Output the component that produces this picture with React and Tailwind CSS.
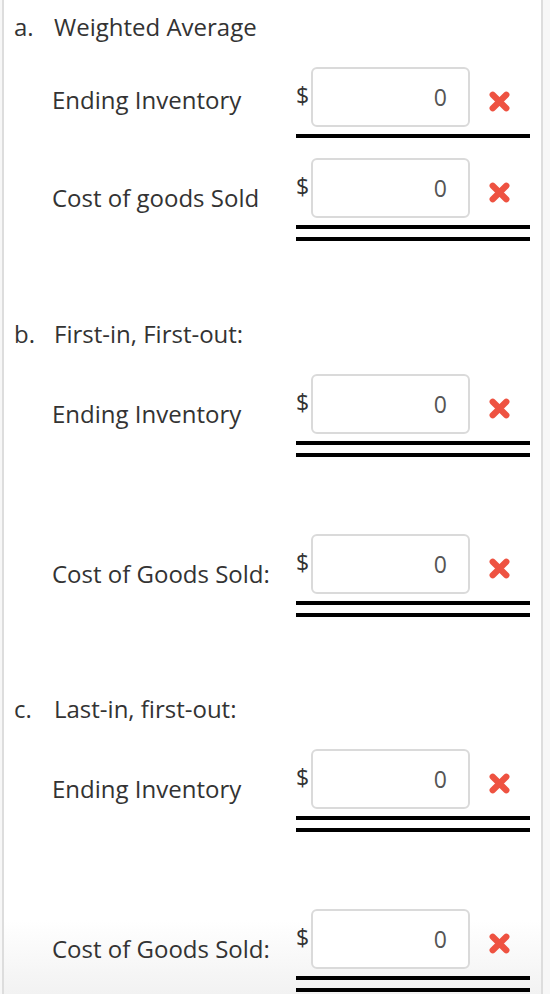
import React from 'react';

const SECTIONS = [
  {
    letter: 'a.',
    title: 'Weighted Average',
    mt: 'mt-0',
    rowGap: 'mt-[20px]',
    rows: [
      { label: 'Ending Inventory', double: false, labelPad: 'pt-[18px]' },
      { label: 'Cost of goods Sold', double: true, labelPad: 'pt-[25px]' },
    ],
  },
  {
    letter: 'b.',
    title: 'First-in, First-out:',
    mt: 'mt-[78px]',
    rowGap: 'mt-[77px]',
    rows: [
      { label: 'Ending Inventory', double: true, labelPad: 'pt-[25px]' },
      { label: 'Cost of Goods Sold:', double: true, labelPad: 'pt-[25px]' },
    ],
  },
  {
    letter: 'c.',
    title: 'Last-in, first-out:',
    mt: 'mt-[77px]',
    rowGap: 'mt-[77px]',
    rows: [
      { label: 'Ending Inventory', double: true, labelPad: 'pt-[25px]' },
      { label: 'Cost of Goods Sold:', double: true, labelPad: 'pt-[25px]' },
    ],
  },
];

// красный крестик "неверно"
function WrongMark() {
  return (
    <svg width="23" height="23" viewBox="0 0 22 22" className="shrink-0">
      <path d="M4.5 4.5 L17.5 17.5 M17.5 4.5 L4.5 17.5" stroke="#ee5241" strokeWidth="6" strokeLinecap="round" fill="none" />
    </svg>
  );
}

function AnswerRow({ row, className }) {
  return (
    <div className={`flex ${className}`}>
      <div className={`w-[245px] shrink-0 pl-[1px] ${row.labelPad} text-[24px] leading-[30px] text-[#333]`}>
        {row.label}
      </div>
      <div className="w-[234px] shrink-0">
        <div className="flex items-start">
          <span className="w-[15px] shrink-0 pt-[13px] text-[23px] leading-[30px] text-[#333]">$</span>
          <div className="w-[159px] h-[60px] shrink-0 border-2 border-[#dadada] rounded-[6px] bg-white flex items-center justify-end pr-[21px] text-[23px] text-[#555]">
            0
          </div>
          <div className="ml-[18px] mt-[23px]">
            <WrongMark />
          </div>
        </div>
        <div className="mt-[7px] h-[4px] bg-black" />
        {row.double && <div className="mt-[8px] h-[4px] bg-black" />}
      </div>
    </div>
  );
}

export default function App() {
  return (
    <div className="w-[550px] h-[994px] overflow-hidden bg-[#f7f7f7]" style={{ fontFamily: '"Open Sans", sans-serif' }}>
      <div className="ml-[2px] w-[541px] h-[994px] border-x-2 border-[#dddddd] pt-[12px] bg-[linear-gradient(to_bottom,#ffffff_920px,#f2f2f2_994px)]">
        {SECTIONS.map((s) => (
          <div key={s.letter} className={s.mt}>
            <div className="flex text-[24px] leading-[30px] text-[#333]">
              <span className="w-[50px] pl-[10px] shrink-0">{s.letter}</span>
              <span>{s.title}</span>
            </div>
            <div className="ml-[47px] mt-[25px]">
              {s.rows.map((r, i) => (
                <AnswerRow key={i} row={r} className={i > 0 ? s.rowGap : ''} />
              ))}
            </div>
          </div>
        ))}
      </div>
    </div>
  );
}
